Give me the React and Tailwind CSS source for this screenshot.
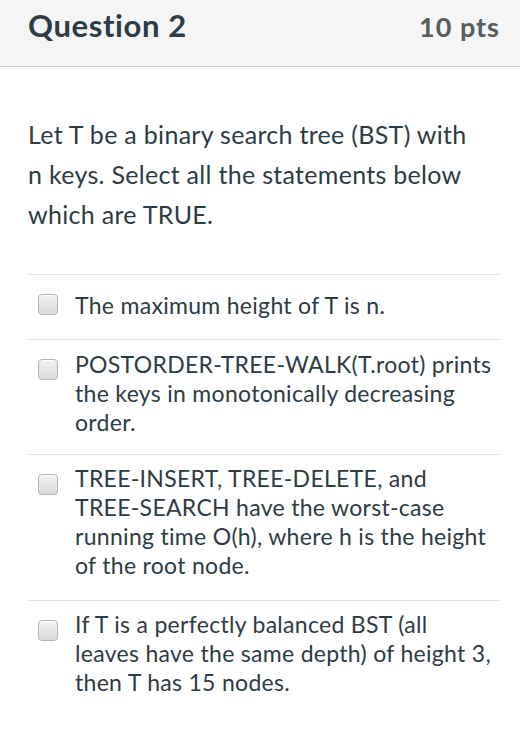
const options = [
  { text: "The maximum height of T is n.", pad: "pt-[16px] pb-[19px]" },
  {
    text: "POSTORDER-TREE-WALK(T.root) prints the keys in monotonically decreasing order.",
    pad: "pt-[10px] pb-[17px]",
  },
  {
    text: (
      <>
        TREE-INSERT, TREE-DELETE, and{" "}
        <span className="whitespace-nowrap">TREE-SEARCH</span> have the
        worst-case running time O(h), where h is the height of the root node.
      </>
    ),
    pad: "pt-[9px] pb-[20px]",
  },
  {
    text: "If T is a perfectly balanced BST (all leaves have the same depth) of height 3, then T has 15 nodes.",
    pad: "pt-[9px] pb-[19px]",
  },
];

function Checkbox() {
  return (
    <span className="mt-[19px] ml-[10px] block h-[21px] w-[20px] shrink-0 rounded-[4px] border border-[#b3b3b3] bg-linear-to-b from-[#f3f3f3] to-[#dadada] shadow-[inset_0_1px_0_#fff]" />
  );
}

export default function App() {
  return (
    <div
      className="min-h-[738px] bg-white text-[#2d3b45]"
      style={{ fontFamily: "Lato, 'Noto Sans', sans-serif" }}
    >
      {/* header */}
      <div className="flex items-baseline justify-between border-b border-[#c7cdd1] bg-[#f5f5f5] pl-[28px] pr-[20px] pt-[7px] pb-[21px]">
        <h2 className="text-[31px] font-bold leading-[36px] tracking-[0.6px]">
          Question 2
        </h2>
        <span className="text-[27px] font-bold leading-[36px] tracking-[1px] text-[#555b5f]">
          10 pts
        </span>
      </div>

      <div className="pl-[28px] pr-[20px] pt-[47px]">
        <p className="pr-[18px] text-[25px] leading-[40px] tracking-[0.3px]">
          Let T be a binary search tree (BST) with n keys. Select all the
          statements below which are TRUE.
        </p>

        <div className="mt-[40px]">
          {options.map((o, i) => (
            <label
              key={i}
              className="flex items-start gap-[17px] border-t border-[#e2e4e6]"
            >
              <Checkbox />
              <span
                className={
                  "pr-[6px] text-[23px] leading-[29px] tracking-[0.3px] " +
                  o.pad
                }
              >
                {o.text}
              </span>
            </label>
          ))}
        </div>
      </div>
    </div>
  );
}
